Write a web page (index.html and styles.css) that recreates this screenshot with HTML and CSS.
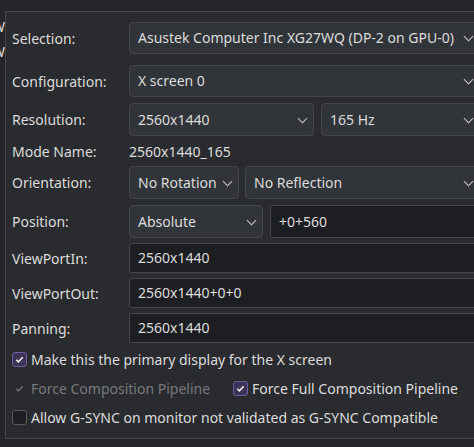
FILE: index.html
```html
<!DOCTYPE html>
<html lang="en">
<head>
    <meta charset="UTF-8">
    <meta name="viewport" content="width=device-width, initial-scale=1.0">
    <title>X Server Display Configuration</title>
    <link rel="stylesheet" href="styles.css">
</head>
<body>
    <div class="window">
        <div class="side">
            <div class="side-item"><span>Display VW</span></div>
            <div class="side-item"><span>Display VW</span></div>
        </div>

        <div class="frame">
            <div class="form">
                <div class="row">
                    <span class="label">Selection:</span>
                    <div class="combo grow">Asustek Computer Inc XG27WQ (DP-2 on GPU-0)<span class="arrow"></span></div>
                </div>

                <div class="row row-config">
                    <span class="label">Configuration:</span>
                    <div class="combo grow">X screen 0<span class="arrow"></span></div>
                </div>

                <div class="row">
                    <span class="label">Resolution:</span>
                    <div class="fields">
                        <div class="combo res">2560x1440<span class="arrow"></span></div>
                        <div class="combo grow">165 Hz<span class="arrow"></span></div>
                    </div>
                </div>

                <div class="row row-text">
                    <span class="label">Mode Name:</span>
                    <span class="value">2560x1440_165</span>
                </div>

                <div class="row">
                    <span class="label">Orientation:</span>
                    <div class="fields narrow">
                        <div class="combo rot">No Rotation<span class="arrow"></span></div>
                        <div class="combo grow">No Reflection<span class="arrow"></span></div>
                    </div>
                </div>

                <div class="row">
                    <span class="label">Position:</span>
                    <div class="fields">
                        <div class="combo pos">Absolute<span class="arrow"></span></div>
                        <div class="entry grow">+0+560</div>
                    </div>
                </div>

                <div class="row row-entry">
                    <span class="label">ViewPortIn:</span>
                    <div class="entry grow">2560x1440</div>
                </div>

                <div class="row row-entry">
                    <span class="label">ViewPortOut:</span>
                    <div class="entry grow">2560x1440+0+0</div>
                </div>

                <div class="row row-entry">
                    <span class="label">Panning:</span>
                    <div class="entry grow">2560x1440</div>
                </div>
            </div>

            <div class="checks">
                <div class="check-row">
                    <label class="check"><span class="box checked"><svg viewBox="0 0 16 16"><path d="M4 8.3l2.6 2.6L12 5.2"/></svg></span>Make this the primary display for the X screen</label>
                </div>
                <div class="check-row">
                    <label class="check disabled"><span class="tick"><svg viewBox="0 0 16 16"><path d="M4 8.3l2.6 2.6L12 5.2"/></svg></span>Force Composition Pipeline</label>
                    <label class="check second"><span class="box checked"><svg viewBox="0 0 16 16"><path d="M4 8.3l2.6 2.6L12 5.2"/></svg></span>Force Full Composition Pipeline</label>
                </div>
                <div class="check-row">
                    <label class="check"><span class="box"></span>Allow G-SYNC on monitor not validated as G-SYNC Compatible</label>
                </div>
            </div>
        </div>
    </div>
</body>
</html>
```

FILE: styles.css
```css
html, body {
    margin: 0;
    padding: 0;
    overflow: hidden;
}
body {
    background-color: #242528;
    font-family: "Noto Sans", "DejaVu Sans", sans-serif;
    font-size: 14px;
    color: #dcdcdc;
    width: 474px;
    height: 447px;
}
.window {
    display: flex;
    width: 480px;
}
.side {
    width: 5px;
    overflow: hidden;
    padding-top: 14px;
}
.side-item {
    display: flex;
    justify-content: flex-end;
    height: 25px;
    line-height: 25px;
    white-space: nowrap;
}
.frame {
    flex: 1;
    margin-top: 11px;
    border-left: 1px solid #45474b;
    border-top: 1px solid #45474b;
    background-color: #2a2b2e;
    height: 426px;
    border-bottom: 1px solid #45474b;
}
.form {
    display: flex;
    flex-direction: column;
    gap: 6px;
    padding: 10px 0 0 6px;
}
.row {
    display: flex;
    align-items: center;
}
.row-config {
    margin-top: 5px;
}
.row-entry {
    margin-top: -1px;
}
.row-text {
    height: 18px;
}
.label {
    width: 117px;
    flex: none;
}
.fields {
    display: flex;
    gap: 7px;
    flex: 1;
}
.fields.narrow {
    gap: 6px;
}
.grow {
    flex: 1;
}
.combo {
    position: relative;
    box-sizing: border-box;
    height: 33px;
    line-height: 31px;
    padding-left: 8px;
    background-color: #313439;
    border: 1px solid #43464c;
    border-radius: 4px;
    white-space: nowrap;
}
.row:first-child .combo,
.row-config .combo {
    height: 32px;
    line-height: 30px;
}
.arrow {
    position: absolute;
    right: 7px;
    top: 50%;
    width: 6px;
    height: 6px;
    margin-top: -5px;
    border-right: 1.3px solid #c8c8c8;
    border-bottom: 1.3px solid #c8c8c8;
    transform: rotate(45deg);
}
.res {
    width: 185px;
}
.rot {
    width: 110px;
}
.pos {
    width: 134px;
}
.entry {
    box-sizing: border-box;
    height: 30px;
    line-height: 28px;
    padding-left: 8px;
    background-color: #1d1e21;
    border: 1px solid #44474c;
    border-radius: 3px;
}
.pos + .entry {
    height: 33px;
    line-height: 31px;
}
.checks {
    padding: 2px 0 0 6px;
}
.check-row {
    display: flex;
    align-items: center;
    height: 29px;
}
.check {
    display: flex;
    align-items: center;
    white-space: nowrap;
}
.check.second {
    margin-left: 23px;
}
.box {
    box-sizing: border-box;
    width: 15px;
    height: 15px;
    margin-right: 4px;
    border: 1px solid #57595e;
    border-radius: 3px;
    background-color: #1e1f22;
    display: flex;
}
.box.checked {
    background-color: #3c3456;
    border-color: #6f5da3;
}
.box svg, .tick svg {
    width: 13px;
    height: 13px;
    fill: none;
    stroke: #f2f2f2;
    stroke-width: 1.8;
}
.tick {
    width: 15px;
    height: 15px;
    margin-right: 4px;
    display: flex;
    align-items: center;
    justify-content: center;
}
.tick svg {
    stroke: #6e6f72;
}
.check.disabled {
    color: #77787b;
}
```
